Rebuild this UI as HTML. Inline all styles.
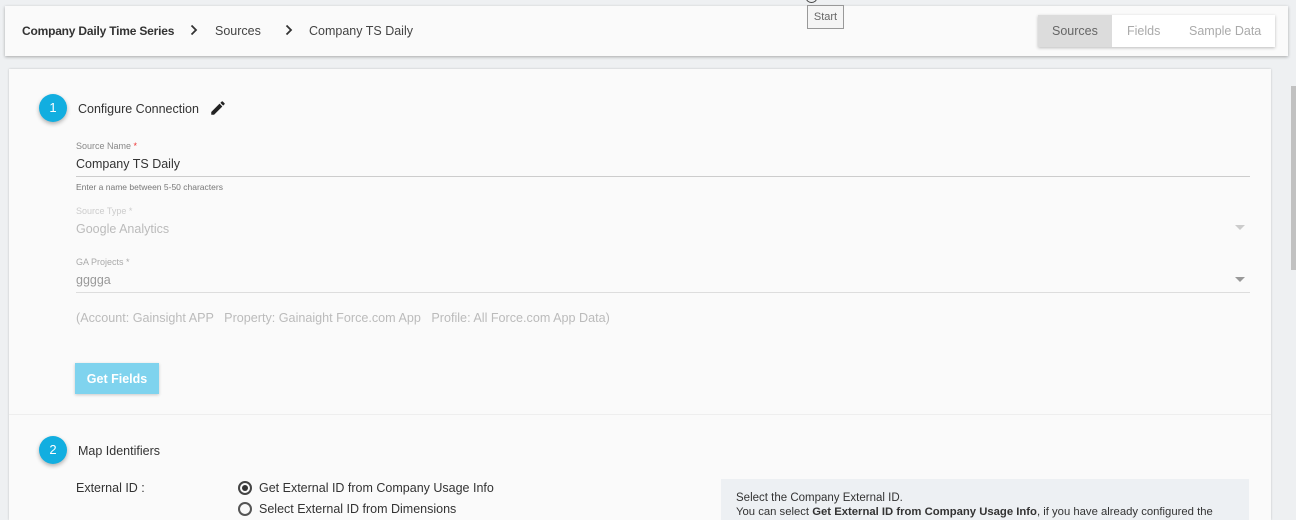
<!DOCTYPE html>
<html style="overflow:hidden;width:1296px;height:520px"><head><style>
*{margin:0;padding:0;box-sizing:border-box}
body{width:1296px;height:520px;overflow:hidden;background:#eef0f2;font-family:"Liberation Sans",Arial,sans-serif;position:relative;color:#333}
.hdr{position:absolute;left:5px;top:6px;width:1283px;height:50px;background:#fafafa;box-shadow:0 1px 3px rgba(0,0,0,.3)}
.t{position:absolute;white-space:nowrap}
.card{position:absolute;left:9px;top:69px;width:1262px;height:451px;background:#fafafa;box-shadow:0 0 2px rgba(0,0,0,.2)}
.circ{position:absolute;width:28px;height:28px;border-radius:50%;background:#12aee0;color:#fff;font-size:13px;text-align:center;line-height:28px;box-shadow:0 2px 4px rgba(0,0,0,.3)}
.line{position:absolute;height:1px;background:#ddd}
</style></head><body>
<div class="hdr">
  <div class="t" style="left:17px;top:18px;font-size:12px;font-weight:bold;color:#333;letter-spacing:-0.2px">Company Daily Time Series</div>
  <svg style="position:absolute;left:185px;top:18px" width="8" height="12" viewBox="0 0 8 12"><path d="M1.5 1.5L6 6l-4.5 4.5" stroke="#333" stroke-width="1.8" fill="none"/></svg>
  <div class="t" style="left:210px;top:18px;font-size:12.5px;color:#444">Sources</div>
  <svg style="position:absolute;left:280px;top:18px" width="8" height="12" viewBox="0 0 8 12"><path d="M1.5 1.5L6 6l-4.5 4.5" stroke="#333" stroke-width="1.8" fill="none"/></svg>
  <div class="t" style="left:304px;top:18px;font-size:12.5px;color:#444">Company TS Daily</div>
  <div style="position:absolute;left:1033px;top:9px;width:237px;height:32px;background:#fff;box-shadow:0 1px 3px rgba(0,0,0,.25)">
    <div style="position:absolute;left:0;top:0;width:74px;height:32px;background:#dcdcdc"></div>
    <div class="t" style="left:14px;top:9px;font-size:12.5px;color:#666">Sources</div>
    <div class="t" style="left:89px;top:9px;font-size:12.5px;color:#aaa">Fields</div>
    <div class="t" style="left:151px;top:9px;font-size:12.5px;color:#aaa">Sample Data</div>
  </div>
</div>
<div style="position:absolute;left:807px;top:5px;width:37px;height:24px;border:1px solid #999;background:#f5f5f5;font-size:11px;color:#666;text-align:center;line-height:22px">Start</div>
<div style="position:absolute;left:806px;top:-6px;width:11px;height:9px;border:1.5px solid #444;border-radius:50%"></div>
<div class="card">
  <div class="circ" style="left:30px;top:25px">1</div>
  <div class="t" style="left:69px;top:33px;font-size:12.5px;color:#333">Configure Connection</div>
  <svg style="position:absolute;left:200px;top:30px" width="18" height="18" viewBox="0 0 24 24"><path d="M3 17.25V21h3.75L17.81 9.94l-3.75-3.75L3 17.25zM20.71 7.04a1 1 0 000-1.41l-2.34-2.34a1 1 0 00-1.41 0l-1.83 1.83 3.75 3.75 1.83-1.83z" fill="#222"/></svg>
  <div class="t" style="left:67px;top:72px;font-size:9px;color:#888">Source Name <span style="color:#e33">*</span></div>
  <div class="t" style="left:67px;top:88px;font-size:12.5px;color:#333">Company TS Daily</div>
  <div class="line" style="left:67px;top:107px;width:1174px;background:#ccc"></div>
  <div class="t" style="left:67px;top:113px;font-size:8.5px;color:#777">Enter a name between 5-50 characters</div>
  <div class="t" style="left:67px;top:137px;font-size:9px;color:#ccc">Source Type *</div>
  <div class="t" style="left:67px;top:153px;font-size:12.5px;color:#bbb">Google Analytics</div>
  <svg style="position:absolute;left:1226px;top:156px" width="10" height="5"><path d="M0 0h10L5 5z" fill="#ccc"/></svg>
  <div class="t" style="left:67px;top:188px;font-size:9px;color:#aaa">GA Projects *</div>
  <div class="t" style="left:67px;top:204px;font-size:12.5px;color:#999">gggga</div>
  <svg style="position:absolute;left:1226px;top:208px" width="10" height="5"><path d="M0 0h10L5 5z" fill="#999"/></svg>
  <div class="line" style="left:67px;top:223px;width:1174px"></div>
  <div class="t" style="left:67px;top:242px;font-size:12.6px;color:#bbb">(Account: Gainsight APP &nbsp;&nbsp;Property: Gainaight Force.com App &nbsp;&nbsp;Profile: All Force.com App Data)</div>
  <div style="position:absolute;left:66px;top:294px;width:84px;height:31px;background:#7fd3ee;color:#fff;font-size:12.5px;font-weight:bold;text-align:center;line-height:32px;box-shadow:0 1px 3px rgba(0,0,0,.2)">Get Fields</div>
  <div class="line" style="left:0;top:345px;width:1262px;background:#eee"></div>
  <div class="circ" style="left:30px;top:367px">2</div>
  <div class="t" style="left:69px;top:375px;font-size:12.5px;color:#333">Map Identifiers</div>
  <div class="t" style="left:67px;top:412px;font-size:12.5px;color:#333">External ID :</div>
  <div style="position:absolute;left:229px;top:412px;width:14px;height:14px;border:2px solid #444;border-radius:50%"><div style="position:absolute;left:2px;top:2px;width:6px;height:6px;border-radius:50%;background:#333"></div></div>
  <div class="t" style="left:250px;top:412px;font-size:12.5px;color:#333">Get External ID from Company Usage Info</div>
  <div style="position:absolute;left:229px;top:433px;width:14px;height:14px;border:2px solid #555;border-radius:50%"></div>
  <div class="t" style="left:250px;top:433px;font-size:12.5px;color:#333">Select External ID from Dimensions</div>
  <div style="position:absolute;left:712px;top:410px;width:528px;height:60px;background:#edf0f3"></div>
  <div class="t" style="left:727px;top:423px;font-size:11.5px;color:#333">Select the Company External ID.</div>
  <div class="t" style="left:727px;top:437px;font-size:11.3px;color:#333">You can select <b>Get External ID from Company Usage Info</b>, if you have already configured the</div>
</div>
<div style="position:absolute;left:1291px;top:86px;width:5px;height:184px;background:#c1c1c1"></div>
</body></html>
